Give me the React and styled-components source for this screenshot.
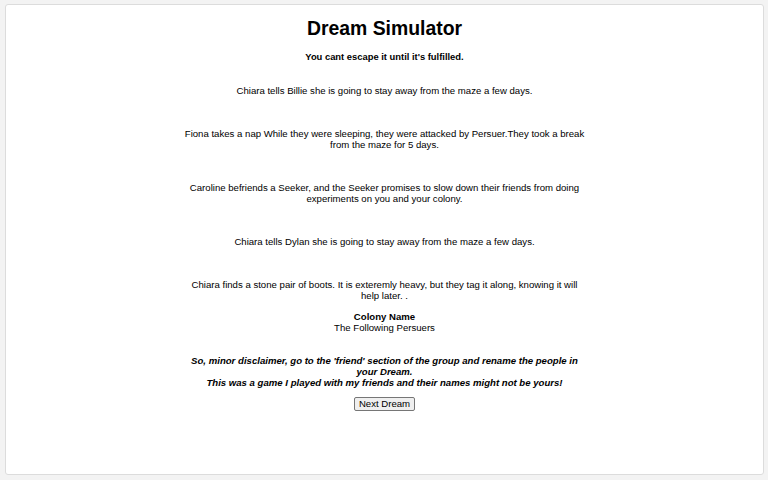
import React from "react";
import styled, { createGlobalStyle } from "styled-components";

const Global = createGlobalStyle`
  html, body { margin: 0; padding: 0; background: #f3f3f3; }
  body { font-family: "Liberation Sans", Arial, sans-serif; color: #000; }
`;

const Card = styled.main`
  box-sizing: border-box;
  margin: 4px 4px 0 5px;
  height: 471px;
  background: #fff;
  border: 1px solid #dcdcdc;
  border-radius: 3px;
  display: flex;
  flex-direction: column;
  align-items: center;
  text-align: center;
  padding-top: 11px;
`;

const Title = styled.h1`
  margin: 0;
  font-size: 19.4px;
  line-height: 24px;
  font-weight: bold;
`;

const Tagline = styled.p`
  margin: 11px 0 0;
  font-size: 9.4px;
  line-height: 12px;
  font-weight: bold;
`;

const Events = styled.section`
  width: 400px;
  display: flex;
  flex-direction: column;
  gap: 32px;
  margin-top: 21.5px;
`;

const Event = styled.p`
  margin: 0;
  font-size: 9.6px;
  line-height: 11px;
`;

const Colony = styled.div`
  margin-top: 10px;
  font-size: 9.6px;
  line-height: 11px;
`;

const ColonyLabel = styled.div`
  font-weight: bold;
`;

const Disclaimer = styled.p`
  width: 400px;
  margin: 22px 0 0;
  font-size: 9.6px;
  line-height: 11px;
  font-weight: bold;
  font-style: italic;
`;

const NextButton = styled.button`
  margin-top: 9.5px;
  font-family: "Liberation Sans", Arial, sans-serif;
  font-size: 9.6px;
  line-height: 12px;
  padding: 0 3.5px;
  background: #efefef;
  border: 1px solid #767676;
  border-radius: 2px;
  color: #000;
`;

const events = [
  "Chiara tells Billie she is going to stay away from the maze a few days.",
  "Fiona takes a nap While they were sleeping, they were attacked by Persuer.They took a break from the maze for 5 days.",
  "Caroline befriends a Seeker, and the Seeker promises to slow down their friends from doing experiments on you and your colony.",
  "Chiara tells Dylan she is going to stay away from the maze a few days.",
  "Chiara finds a stone pair of boots. It is exteremly heavy, but they tag it along, knowing it will help later. .",
];

export default function App() {
  return (
    <>
      <Global />
      <Card>
        <Title>Dream Simulator</Title>
        <Tagline>You cant escape it until it's fulfilled.</Tagline>
        <Events>
          {events.map((e, i) => (
            <Event key={i}>{e}</Event>
          ))}
        </Events>
        <Colony>
          <ColonyLabel>Colony Name</ColonyLabel>
          <div>The Following Persuers</div>
        </Colony>
        <Disclaimer>
          So, minor disclaimer, go to the 'friend' section of the group and rename the people in your Dream.
          <br />
          This was a game I played with my friends and their names might not be yours!
        </Disclaimer>
        <NextButton>Next Dream</NextButton>
      </Card>
    </>
  );
}
